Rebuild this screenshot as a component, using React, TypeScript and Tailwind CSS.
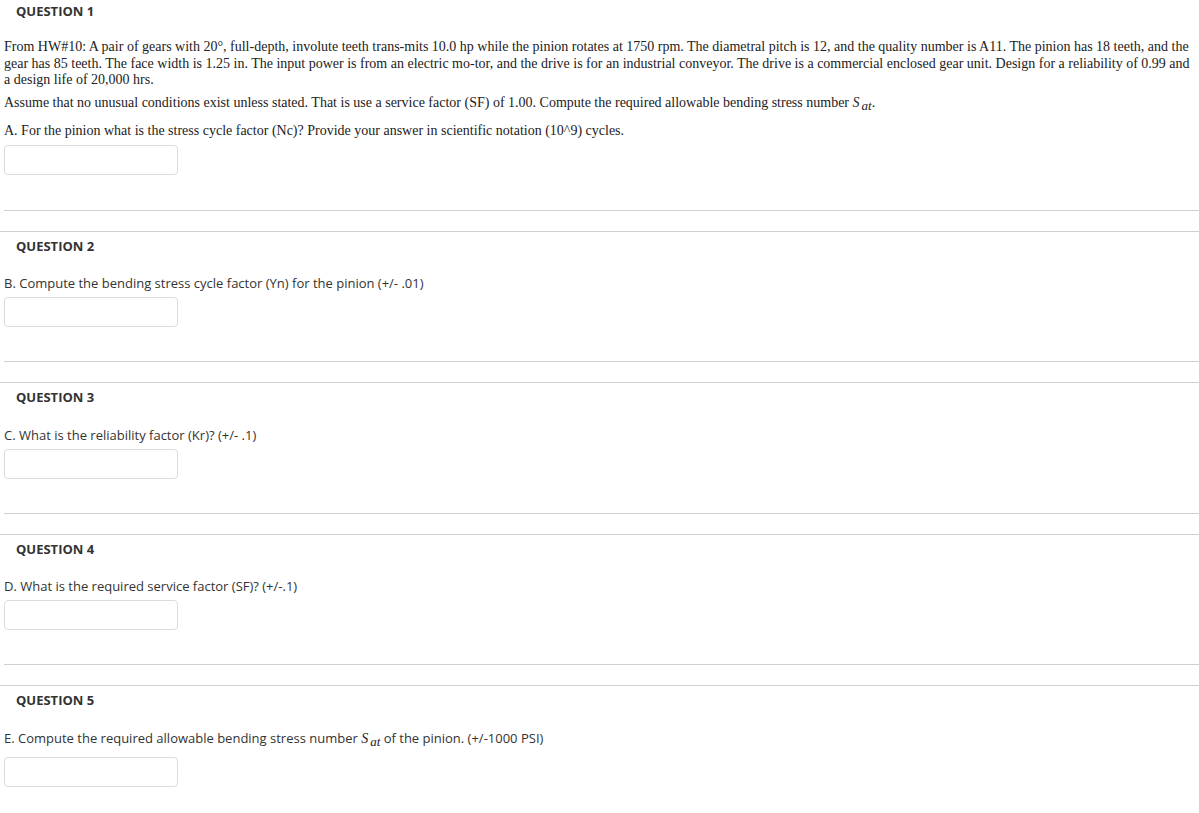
// Quiz page: five questions, each with a heading, prompt and a blank answer box.

const sans = "font-['Open_Sans',sans-serif]";
const serif = "font-['Liberation_Serif','Times_New_Roman',serif]";

function Sat() {
  return (
    <span className={`${serif} italic text-[#222]`}>
      <span className="text-[14px]">S</span>
      <span className="ml-[2px] relative top-[3px] text-[13px]">at</span>
    </span>
  );
}

function AnswerBox({ className = "" }: { className?: string }) {
  return (
    <input
      type="text"
      className={`block w-[174px] h-[30px] ml-1 rounded-[4px] border border-[#dcdcdc] bg-white ${className}`}
    />
  );
}

function Heading({ n }: { n: number }) {
  return (
    <h2 className={`${sans} pl-4 text-[13px] leading-[18px] font-bold text-[#333]`}>
      QUESTION {n}
    </h2>
  );
}

function Divider() {
  return <div className="ml-1 border-t border-[#d0d0d0]" />;
}

function Question({
  n,
  label,
  labelGap = "mt-[19px]",
  boxGap = "mt-[5px]",
  tail = "mt-[34px]",
}: {
  n: number;
  label: React.ReactNode;
  labelGap?: string;
  boxGap?: string;
  tail?: string;
}) {
  return (
    <section className="border-t border-[#d0d0d0] pt-[5px]">
      <Heading n={n} />
      <p className={`${sans} ${labelGap} pl-1 text-[13px] leading-[18px] text-[#333]`}>{label}</p>
      <AnswerBox className={boxGap} />
      <div className={`${tail} mb-[20px]`}>
        <Divider />
      </div>
    </section>
  );
}

export default function App() {
  return (
    <div className="min-h-[813px] w-[1199px] bg-white">
      <section className="pt-[2px]">
        <Heading n={1} />
        <div className={`${serif} mt-[19px] px-1 text-[14px] leading-[16.5px] text-[#222]`}>
          <p>
            From HW#10: A pair of gears with 20°, full-depth, involute teeth trans-mits 10.0 hp while
            the pinion rotates at 1750 rpm. The diametral pitch is 12, and the quality number is A11.
            The pinion has 18 teeth, and the gear has 85 teeth. The face width is 1.25 in. The input
            power is from an electric mo-tor, and the drive is for an industrial conveyor. The drive
            is a commercial enclosed gear unit. Design for a reliability of 0.99 and a design life of
            20,000 hrs.
          </p>
          <p className="mt-[6px] h-[17px]">
            Assume that no unusual conditions exist unless stated. That is use a service factor (SF) of
            1.00. Compute the required allowable bending stress number <Sat />.
          </p>
          <p className="mt-[11px]">
            A. For the pinion what is the stress cycle factor (Nc)? Provide your answer in scientific
            notation (10^9) cycles.
          </p>
        </div>
        <AnswerBox className="mt-[6px]" />
        <div className="mt-[35px] mb-[20px]">
          <Divider />
        </div>
      </section>

      <Question n={2} label="B. Compute the bending stress cycle factor (Yn) for the pinion (+/- .01)" />
      <Question
        n={3}
        label="C. What is the reliability factor (Kr)? (+/- .1)"
        labelGap="mt-[20px]"
      />
      <Question n={4} label="D. What is the required service factor (SF)? (+/-.1)" />
      <Question
        n={5}
        label={
          <>
            E. Compute the required allowable bending stress number <Sat /> of the pinion. (+/-1000 PSI)
          </>
        }
        labelGap="mt-[20px]"
        boxGap="mt-[9px]"
      />
    </div>
  );
}
